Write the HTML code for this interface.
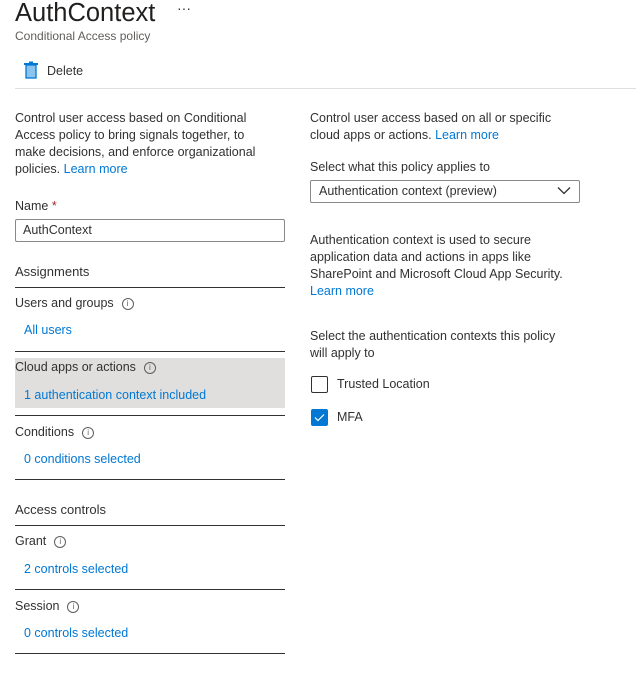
<!DOCTYPE html>
<html><head><meta charset="utf-8"><style>
body{margin:0;width:636px;height:680px;background:#fff;position:relative;overflow:hidden;font-family:"Liberation Sans",sans-serif;color:#323130;font-size:12.5px}
.a{position:absolute;white-space:nowrap;line-height:17px}
.l{color:#0078d4}
.hr{position:absolute;left:15px;width:270px;height:1px;background:#323130}
.i{display:inline-block;width:10px;height:10px;border:1px solid #605e5c;border-radius:50%;font-size:8px;line-height:10px;text-align:center;margin-left:8px;vertical-align:1px;color:#605e5c}
</style></head><body>
<div class="a" style="left:15px;top:-1px;font-size:25.5px;line-height:28px;color:#201f1e">AuthContext</div>
<div class="a" style="left:177px;top:0px;font-size:14px">···</div>
<div class="a" style="left:15px;top:28px;font-size:12px;color:#605e5c">Conditional Access policy</div>
<svg style="position:absolute;left:23px;top:61px" width="16" height="18" viewBox="0 0 16 18"><rect x="3" y="4" width="10" height="13" fill="#8cc4f0" stroke="#0078d4" stroke-width="1.3"/><rect x="1" y="2" width="14" height="2" fill="#0078d4"/><rect x="6" y="0.5" width="4" height="2" fill="#0078d4"/></svg>
<div class="a" style="left:47px;top:63px">Delete</div>
<div style="position:absolute;left:15px;right:0;top:88px;height:1px;background:#e1dfdd"></div>

<div class="a" style="left:15px;top:110px">Control user access based on Conditional<br>Access policy to bring signals together, to<br>make decisions, and enforce organizational<br>policies. <span class="l">Learn more</span></div>
<div class="a" style="left:15px;top:198px">Name <span style="color:#a4262c">*</span></div>
<div style="position:absolute;left:15px;top:219px;width:268px;height:21px;border:1px solid #8a8886;border-radius:2px"></div>
<div class="a" style="left:23px;top:222px">AuthContext</div>
<div class="a" style="left:15px;top:263px;font-size:13px">Assignments</div>
<div class="hr" style="top:287px"></div>
<div class="a" style="left:15px;top:295px">Users and groups<span class="i">i</span></div>
<div class="a l" style="left:24px;top:322px">All users</div>
<div class="hr" style="top:351px"></div>
<div style="position:absolute;left:15px;top:358px;width:270px;height:50px;background:#e1dfdd"></div>
<div class="a" style="left:15px;top:359px">Cloud apps or actions<span class="i">i</span></div>
<div class="a l" style="left:24px;top:387px">1 authentication context included</div>
<div class="hr" style="top:415px"></div>
<div class="a" style="left:15px;top:424px">Conditions<span class="i">i</span></div>
<div class="a l" style="left:24px;top:451px">0 conditions selected</div>
<div class="hr" style="top:479px"></div>
<div class="a" style="left:15px;top:501px;font-size:13px">Access controls</div>
<div class="hr" style="top:525px"></div>
<div class="a" style="left:15px;top:533px">Grant<span class="i">i</span></div>
<div class="a l" style="left:24px;top:561px">2 controls selected</div>
<div class="hr" style="top:589px"></div>
<div class="a" style="left:15px;top:598px">Session<span class="i">i</span></div>
<div class="a l" style="left:24px;top:625px">0 controls selected</div>
<div class="hr" style="top:653px"></div>

<div class="a" style="left:310px;top:110px">Control user access based on all or specific<br>cloud apps or actions. <span class="l">Learn more</span></div>
<div class="a" style="left:310px;top:159px">Select what this policy applies to</div>
<div style="position:absolute;left:310px;top:180px;width:268px;height:21px;border:1px solid #8a8886;border-radius:2px"></div>
<div class="a" style="left:319px;top:183px">Authentication context (preview)</div>
<svg style="position:absolute;left:557px;top:186px" width="14" height="9" viewBox="0 0 14 9"><path d="M1 1.5L7 7.5L13 1.5" fill="none" stroke="#323130" stroke-width="1.3"/></svg>
<div class="a" style="left:310px;top:232px">Authentication context is used to secure<br>application data and actions in apps like<br>SharePoint and Microsoft Cloud App Security.<br><span class="l">Learn more</span></div>
<div class="a" style="left:310px;top:328px">Select the authentication contexts this policy<br>will apply to</div>
<div style="position:absolute;left:311px;top:376px;width:15px;height:15px;border:1px solid #323130;border-radius:2px"></div>
<div class="a" style="left:337px;top:376px">Trusted Location</div>
<div style="position:absolute;left:311px;top:409px;width:17px;height:17px;background:#0078d4;border-radius:2px"></div>
<svg style="position:absolute;left:311px;top:409px" width="17" height="17" viewBox="0 0 17 17"><path d="M4 8.5L7 11.5L13 5.5" fill="none" stroke="#fff" stroke-width="1.2"/></svg>
<div class="a" style="left:337px;top:409px">MFA</div>
</body></html>
